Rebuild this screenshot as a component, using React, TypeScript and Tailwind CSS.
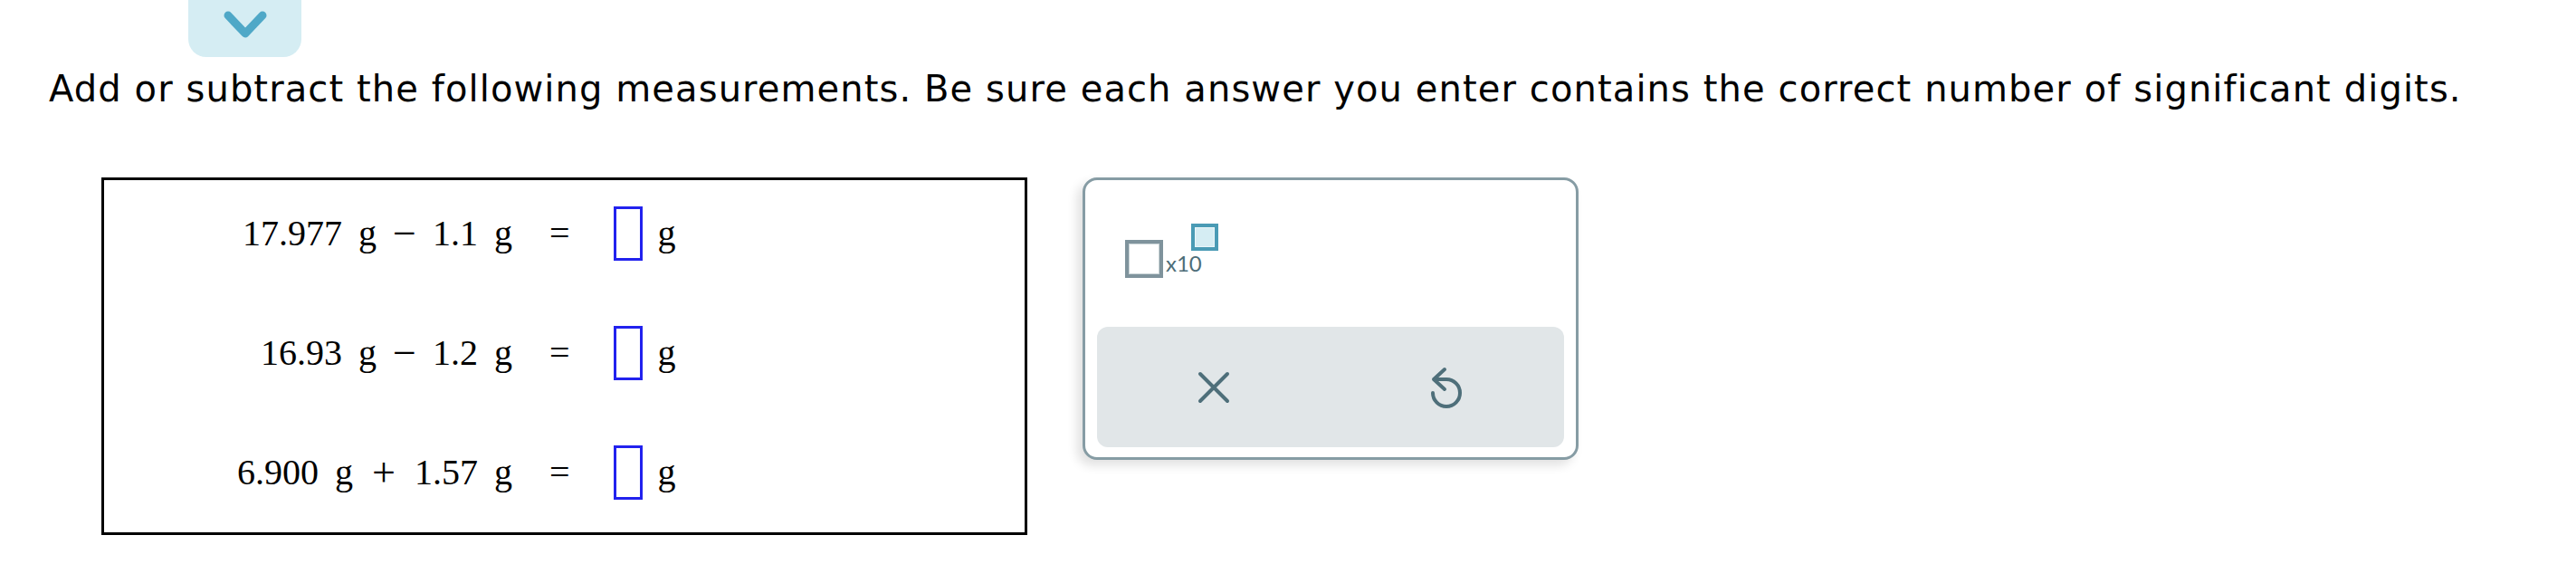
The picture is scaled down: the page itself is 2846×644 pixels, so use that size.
export default function App() {
  const rows = [
    { a: "17.977", op: "−", b: "1.1" },
    { a: "16.93", op: "−", b: "1.2" },
    { a: "6.900", op: "+", b: "1.57" },
  ];

  return (
    <div className="h-[644px] w-full overflow-hidden bg-white text-black">
      {/* collapse toggle */}
      <div className="ml-[208px] flex h-[63px] w-[125px] justify-center rounded-b-[20px] bg-[#d5edf3] pt-[10px]">
        <svg width="52" height="34" viewBox="0 0 52 34" fill="none">
          <path
            d="M7 7 L26 27 L45 7"
            stroke="#4fa8c7"
            strokeWidth="9"
            strokeLinecap="round"
            strokeLinejoin="round"
          />
        </svg>
      </div>

      <p className="mt-[11px] pl-[54px] font-['DejaVu_Sans',sans-serif] text-[40px] leading-[48px] tracking-[1.1px] whitespace-nowrap">
        Add or subtract the following measurements. Be sure each answer you enter contains the correct number of significant digits.
      </p>

      <div className="mt-[74px] flex items-start gap-[61px] pl-[112px]">
        {/* equations */}
        <div className="flex h-[395px] w-[1023px] flex-col gap-[72px] border-[3px] border-black pt-[29px] font-['Liberation_Serif',serif] text-[40px]">
          {rows.map((r) => (
            <div key={r.a} className="flex h-[60px] items-center">
              <div className="flex w-[451px] items-center justify-end gap-[18px]">
                <span>{r.a}</span>
                <span>g</span>
                <span className={r.op === "+" ? "mx-[3px] text-[46px] leading-none" : "text-[46px] leading-none"}>{r.op}</span>
                <span>{r.b}</span>
                <span>g</span>
              </div>
              <span className="ml-[41px]">=</span>
              <div className="ml-[48px] h-[60px] w-[32px] border-[3px] border-[#2222ee]" />
              <span className="ml-[17px]">g</span>
            </div>
          ))}
        </div>

        {/* answer tools */}
        <div className="flex h-[312px] w-[548px] flex-col rounded-[16px] border-[3px] border-[#869ca4] bg-white pt-[48px] shadow-[-6px_6px_12px_rgba(0,0,0,0.12)]">
          <div className="ml-[44px] flex h-[60px] items-start">
            <div className="mt-[18px] h-[42px] w-[42px] border-4 border-[#7f939c] shadow-[inset_0_0_0_1px_#c9d3d6]" />
            <span className="ml-[3px] mt-[32px] font-['Lato',sans-serif] text-[24px] leading-[24px] text-[#4d6d78]">
              x10
            </span>
            <div className="-ml-[12px] h-[30px] w-[30px] border-4 border-[#4a9bb5] bg-[#d5edf3] shadow-[inset_0_0_0_1px_#eaf6f9]" />
          </div>

          <div className="mx-[13px] mt-[54px] flex h-[133px] rounded-[12px] bg-[#e1e6e8]">
            <button className="flex flex-1 items-center justify-center">
              <svg width="36" height="36" viewBox="0 0 36 36" fill="none">
                <path
                  d="M3 3 L33 33 M33 3 L3 33"
                  stroke="#4e6f7a"
                  strokeWidth="4"
                  strokeLinecap="round"
                />
              </svg>
            </button>
            <button className="flex flex-1 items-center justify-center">
              <svg width="40" height="52" viewBox="0 0 40 52" fill="none">
                <path
                  d="M19 17 A15 15 0 1 1 4 32 M5 17 H19 M17 6 L5 17 L17 28"
                  stroke="#4e6f7a"
                  strokeWidth="4"
                  strokeLinecap="round"
                  strokeLinejoin="round"
                />
              </svg>
            </button>
          </div>
        </div>
      </div>
    </div>
  );
}
